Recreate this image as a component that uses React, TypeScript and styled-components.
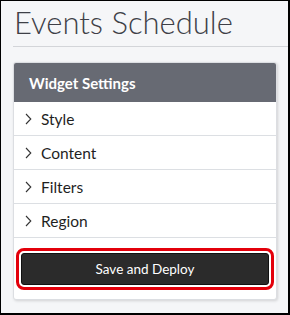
import React from 'react'
import styled, { createGlobalStyle } from 'styled-components'

const GlobalStyle = createGlobalStyle`
  html, body {
    margin: 0;
    padding: 0;
    background: #ffffff;
  }
  * {
    box-sizing: border-box;
  }
`

const sections = ['Style', 'Content', 'Filters', 'Region']

export default function App() {
  return (
    <>
      <GlobalStyle />
      <Frame>
        <Title>Events Schedule</Title>
        <Rule />
        <Panel>
          <PanelHeader>Widget Settings</PanelHeader>
          {sections.map((name) => (
            <Row key={name}>
              <Chevron viewBox="0 0 7 12" aria-hidden>
                <path d="M1 1 L5.8 6 L1 11" />
              </Chevron>
              <RowLabel>{name}</RowLabel>
            </Row>
          ))}
          <Footer>
            <DeployButton>Save and Deploy</DeployButton>
          </Footer>
        </Panel>
      </Frame>
    </>
  )
}

const Frame = styled.div`
  width: 290px;
  height: 315px;
  background: #f5f6f8;
  border-style: solid;
  border-color: #000;
  border-width: 1px 2px 2px 1px;
  padding: 0 0 0 12px;
  font-family: Lato, 'Liberation Sans', sans-serif;
  overflow: hidden;
`

const Title = styled.h1`
  margin: 0;
  padding: 3px 0 0 1px;
  font-family: Lato, 'Liberation Sans', sans-serif;
  font-weight: 300;
  font-size: 31px;
  line-height: 36px;
  color: #3e4047;
`

const Rule = styled.div`
  height: 1px;
  margin-top: 6px;
  background: #d3d5d9;
`

const Panel = styled.div`
  width: 264px;
  margin-top: 15px;
  background: #ffffff;
  border: 1px solid #dcdee2;
  border-radius: 3px;
  box-shadow: 1px 1px 3px rgba(0, 0, 0, 0.15);
`

const PanelHeader = styled.div`
  height: 39px;
  display: flex;
  align-items: center;
  padding-left: 15px;
  background: #676a73;
  border-radius: 2px 2px 0 0;
  color: #ffffff;
  font-weight: 700;
  font-size: 15px;
`

const Row = styled.div`
  height: 34px;
  display: flex;
  align-items: center;
  gap: 9px;
  padding-left: 11px;
  border-bottom: 1px solid #dcdfe3;
`

const Chevron = styled.svg`
  width: 7px;
  height: 12px;
  fill: none;
  stroke: #333333;
  stroke-width: 1.1;
`

const RowLabel = styled.span`
  font-size: 15.5px;
  color: #1f1f1f;
`

const Footer = styled.div`
  padding: 15px 7px 14px 7px;
`

const DeployButton = styled.button`
  display: block;
  width: 100%;
  height: 32px;
  background: #2b2b2b;
  border: 1px solid #111;
  border-radius: 3px;
  color: #ffffff;
  font-family: Lato, 'Liberation Sans', sans-serif;
  font-size: 13.5px;
  outline: 3px solid #e3000b;
  outline-offset: 2px;
  cursor: pointer;
`
